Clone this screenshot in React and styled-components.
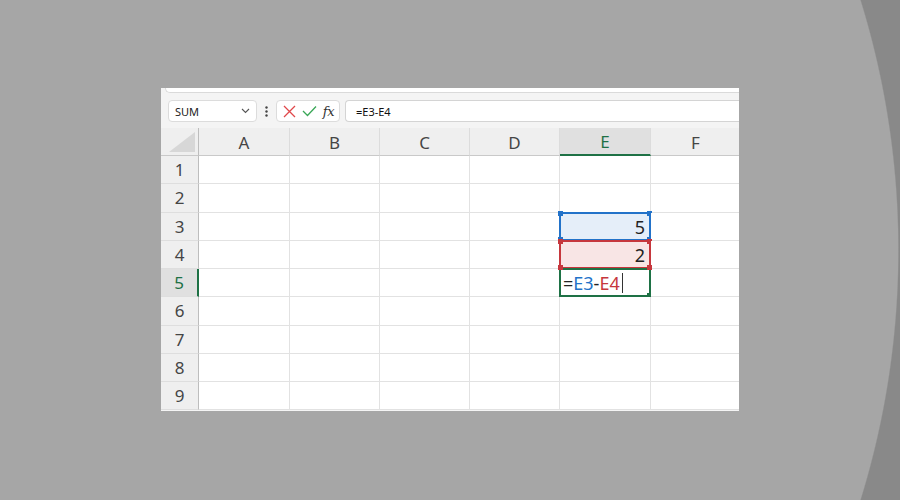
import React from "react";
import styled, { createGlobalStyle, css } from "styled-components";

const Global = createGlobalStyle`
  html, body { margin: 0; padding: 0; }
  body {
    width: 900px;
    height: 500px;
    overflow: hidden;
    background: radial-gradient(circle 845px at 54px 250px, #a6a6a6 99.85%, #898989 100%);
    font-family: "Noto Sans", "Open Sans", sans-serif;
  }
`;

const GREEN = "#1e7145";
const BLUE = "#2272c9";
const RED = "#c6373d";

const Page = styled.div`
  width: 900px;
  height: 500px;
  box-sizing: border-box;
  padding: 88px 0 0 161px;
`;

const Window = styled.div`
  width: 578px;
  height: 323px;
  background: #f4f4f4;
  overflow: hidden;
  display: flex;
  flex-direction: column;
`;

const RibbonEdge = styled.div`
  height: 4px;
  margin-left: 4px;
  background: #ffffff;
  border: 1px solid #dadada;
  border-top: none;
  border-right: none;
  border-radius: 0 0 0 6px;
`;

const FormulaBar = styled.div`
  display: flex;
  align-items: stretch;
  height: 22px;
  margin: 7px 0 6px 7px;
`;

const NameBox = styled.div`
  width: 89px;
  box-sizing: border-box;
  background: #fff;
  border: 1px solid #dcdcdc;
  border-radius: 4px;
  display: flex;
  align-items: center;
  justify-content: space-between;
  padding: 0 6px 0 6px;
  font-size: 11px;
  color: #222;
`;

const Dots = styled.div`
  width: 19px;
  display: flex;
  align-items: center;
  justify-content: center;
`;

const ActionBox = styled.div`
  width: 64px;
  box-sizing: border-box;
  background: #fff;
  border: 1px solid #dcdcdc;
  border-radius: 4px;
  display: flex;
  align-items: center;
  justify-content: space-between;
  padding: 0 5px 0 6px;
`;

const Fx = styled.span`
  font-family: "DejaVu Serif", "Liberation Serif", serif;
  font-style: italic;
  font-size: 13px;
  color: #333;
  letter-spacing: -0.5px;
`;

const FormulaInput = styled.div`
  flex: 1;
  margin-left: 5px;
  background: #fff;
  border: 1px solid #d4d4d4;
  border-right: none;
  border-radius: 4px 0 0 4px;
  display: flex;
  align-items: center;
  padding-left: 10px;
  font-size: 11px;
  color: #111;
`;

const Grid = styled.div`
  display: grid;
  grid-template-columns: 38px 91px 90px 90px 90px 91px 90px;
  grid-template-rows: 28px repeat(9, 28.25px);
  background: #fff;
`;

const headerBase = css`
  box-sizing: border-box;
  background: #efefef;
  display: flex;
  align-items: center;
  justify-content: center;
  font-size: 17px;
  color: #454545;
`;

const Corner = styled.div`
  ${headerBase};
  position: relative;
  border-right: 1px solid #bdbdbd;
  border-bottom: 1px solid #c9c9c9;
`;

const ColHeader = styled.div`
  ${headerBase};
  border-right: 1px solid #dcdcdc;
  border-bottom: 1px solid #c9c9c9;
  padding-top: 1px;
  ${(p) =>
    p.$active &&
    css`
      background: #e0e0e0;
      color: ${GREEN};
      border-bottom: 2px solid ${GREEN};
    `}
`;

const RowHeader = styled.div`
  ${headerBase};
  border-right: 1px solid #bdbdbd;
  border-bottom: 1px solid #dedede;
  ${(p) =>
    p.$active &&
    css`
      background: #e0e0e0;
      color: ${GREEN};
      border-right: 2px solid ${GREEN};
    `}
`;

const Cell = styled.div`
  box-sizing: border-box;
  position: relative;
  border-right: 1px solid #e2e2e2;
  border-bottom: 1px solid #e2e2e2;
  display: flex;
  align-items: flex-end;
  justify-content: ${(p) => (p.$left ? "flex-start" : "flex-end")};
  padding: 0 5px 1px 3px;
  font-size: 18px;
  line-height: 24px;
  color: #222;
  background: ${(p) => p.$fill || "#fff"};
`;

const RefBox = styled.div`
  position: absolute;
  top: -1px;
  left: -1px;
  right: -1px;
  bottom: -1px;
  border: 2px solid ${(p) => p.$color};
  pointer-events: none;
`;

const Handle = styled.span`
  position: absolute;
  z-index: ${(p) => p.$z || "auto"};
  width: 5px;
  height: 5px;
  background: ${(p) => p.$color};
  ${(p) => (p.$top ? "top: -3px;" : "bottom: -3px;")}
  ${(p) => (p.$left ? "left: -3px;" : "right: -3px;")}
`;

const Ref = styled.span`
  color: ${(p) => p.$color};
`;

const Caret = styled.span`
  display: inline-block;
  width: 1px;
  height: 20px;
  background: #333;
  margin-left: 2px;
  vertical-align: -3px;
`;

const CornerTriangle = () => (
  <svg width="26" height="20" viewBox="0 0 26 20" style={{ position: "absolute", right: 3, bottom: 3 }}>
    <polygon points="26,0 26,20 0,20" fill="#d7d7d7" />
  </svg>
);

const Chevron = () => (
  <svg width="9" height="6" viewBox="0 0 9 6">
    <path d="M1 1 L4.5 4.5 L8 1" fill="none" stroke="#555" strokeWidth="1.1" />
  </svg>
);

const VDots = () => (
  <svg width="3" height="11" viewBox="0 0 3 11">
    <circle cx="1.5" cy="1.5" r="1.2" fill="#444" />
    <circle cx="1.5" cy="5.5" r="1.2" fill="#444" />
    <circle cx="1.5" cy="9.5" r="1.2" fill="#444" />
  </svg>
);

const Cross = () => (
  <svg width="13" height="13" viewBox="0 0 13 13">
    <path d="M1 1 L12 12 M12 1 L1 12" stroke="#e0484b" strokeWidth="1.3" fill="none" />
  </svg>
);

const Check = () => (
  <svg width="15" height="12" viewBox="0 0 15 12">
    <path d="M1 6 L5.5 10.5 L14 1.5" stroke="#3aa757" strokeWidth="1.3" fill="none" />
  </svg>
);

const cols = ["A", "B", "C", "D", "E", "F"];

function renderCell(r, c) {
  const key = `${c}${r}`;
  if (key === "E3") {
    return (
      <Cell key={key} $fill="#e5eef9">
        5
        <RefBox $color={BLUE}>
          <Handle $color={BLUE} $top $left />
          <Handle $color={BLUE} $top />
          <Handle $color={BLUE} $left />
          <Handle $color={BLUE} />
        </RefBox>
      </Cell>
    );
  }
  if (key === "E4") {
    return (
      <Cell key={key} $fill="#f8e5e5">
        2
        <RefBox $color={RED}>
          <Handle $color={RED} $top $left />
          <Handle $color={RED} $top />
          <Handle $color={RED} $left $z={3} />
          <Handle $color={RED} $z={3} />
        </RefBox>
      </Cell>
    );
  }
  if (key === "E5") {
    return (
      <Cell key={key} $left>
        <span>
          =<Ref $color={BLUE}>E3</Ref>-<Ref $color={RED}>E4</Ref>
          <Caret />
        </span>
        <RefBox $color={GREEN}>
          <Handle $color={GREEN} />
        </RefBox>
      </Cell>
    );
  }
  return <Cell key={key} />;
}

export default function App() {
  return (
    <>
      <Global />
      <Page>
        <Window>
          <RibbonEdge />
          <FormulaBar>
            <NameBox>
              <span>SUM</span>
              <Chevron />
            </NameBox>
            <Dots>
              <VDots />
            </Dots>
            <ActionBox>
              <Cross />
              <Check />
              <Fx>fx</Fx>
            </ActionBox>
            <FormulaInput>=E3-E4</FormulaInput>
          </FormulaBar>
          <Grid>
            <Corner>
              <CornerTriangle />
            </Corner>
            {cols.map((c) => (
              <ColHeader key={c} $active={c === "E"}>
                {c}
              </ColHeader>
            ))}
            {Array.from({ length: 9 }, (_, i) => i + 1).map((r) => (
              <React.Fragment key={r}>
                <RowHeader $active={r === 5}>{r}</RowHeader>
                {cols.map((c) => renderCell(r, c))}
              </React.Fragment>
            ))}
          </Grid>
        </Window>
      </Page>
    </>
  );
}
